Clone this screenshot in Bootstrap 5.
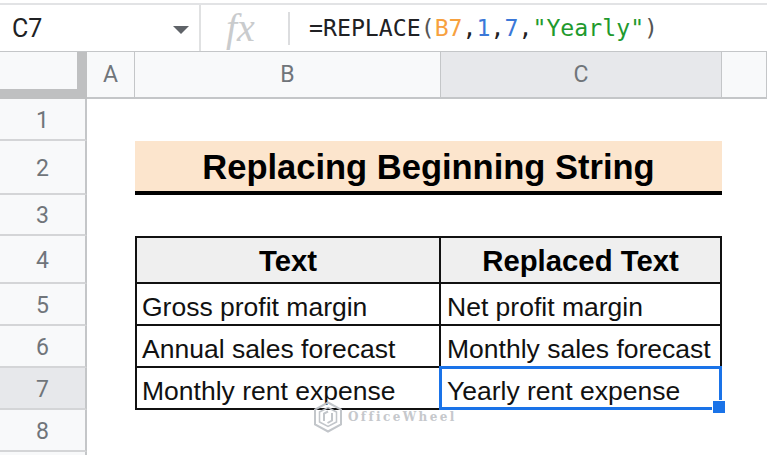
<!DOCTYPE html>
<html lang="en">
<head>
    <meta charset="UTF-8">
    <meta name="viewport" content="width=device-width, initial-scale=1.0">
    <title>Replacing Beginning String</title>
    <link rel="stylesheet" href="https://cdn.jsdelivr.net/npm/bootstrap@5.3.1/dist/css/bootstrap.min.css">
    <style>
        html, body { background: #fff; overflow: hidden; }
        .sheet-app { width: 767px; height: 455px; overflow: hidden; position: relative; font-family: Roboto, "Liberation Sans", sans-serif; }

        /* formula bar */
        .formula-bar { height: 52px; padding-top: 3px; background: #fff; border-bottom: 1px solid #c4c6c8; }
        .formula-inner { height: 48px; border-top: 2px solid #e2e3e5; }
        .name-box { width: 201px; padding-left: 12px; padding-top: 3px; font-size: 25px; color: #202124; border-right: 2px solid #e0e1e2; margin-bottom: 1px; }
        .name-caret { width: 0; height: 0; margin-right: 10px; margin-top: 2px; border-left: 8px solid transparent; border-right: 8px solid transparent; border-top: 8px solid #5f6368; }
        .fx-box { width: 87px; font-family: "Liberation Serif", serif; font-style: italic; font-size: 40px; color: #c9cbcd; padding-left: 25px; line-height: 1; }
        .fx-rule { width: 2px; height: 33px; background: #dcdddf; }
        .formula-text { padding-left: 19px; font-family: "DejaVu Sans Mono", monospace; font-size: 23.2px; color: #202124; white-space: pre; }
        .ref-orange { color: #f7a13f; }
        .num-blue { color: #3b78d8; }
        .str-green { color: #1f9a2e; }
        .paren-grey { color: #555; }

        /* grid */
        .grid-table { table-layout: fixed; width: 767px; border-collapse: separate; border-spacing: 0; }
        .grid-table td, .grid-table th { padding: 0; font-weight: 400; line-height: 1; }
        .col-head, .row-head { background: #f8f9fa; color: #70757a; font-size: 23px; text-align: center; }
        .col-head { height: 47px; border-bottom: 2px solid #c4c6c8; border-right: 1px solid #c4c6c8; }
        .corner { border-right: 10px solid #bfc0c1; border-bottom: 10px solid #bfc0c1; background: #f8f9fa; }
        .grid-table .row-head { border-right: 2px solid #c4c6c8; border-bottom: 2px solid #d4d5d7; padding-top: 2px; }
        .is-active { background: #e7e8eb; }
        .row-h41 { height: 41px; }
        .row-h42 { height: 42px; }
        .row-h54 { height: 54px; }
        .row-h48 { height: 48px; }

        .grid-table .title-cell { background: #fce5cd; border-bottom: 4px solid #000; font-family: "Liberation Sans", sans-serif; font-weight: 700; font-size: 34.5px; text-align: center; color: #000; padding-top: 2px; }
        .grid-table .data-cell { font-family: "Liberation Sans", sans-serif; font-size: 26.5px; color: #111; padding: 6px 0 0 6px; border-right: 2px solid #111; border-bottom: 2px solid #111; white-space: nowrap; overflow: hidden; }
        .grid-table .data-cell.first-col { border-left: 2px solid #111; padding-left: 5px; }
        .grid-table .data-cell.head-cell { background: #efefef; font-weight: 700; font-size: 29.3px; text-align: center; padding: 2px 0 0; color: #000; }
        .grid-table .data-cell.top-edge { border-top: 2px solid #111; }

        .grid-table .data-cell.picked { position: relative; overflow: visible; }
        .pick-frame { position: absolute; left: -2px; top: -2px; right: -2px; bottom: -2px; border: 3px solid #1a73e8; pointer-events: none; }
        .pick-handle { position: absolute; right: -7px; bottom: -7px; width: 14px; height: 14px; background: #1a73e8; border: 1px solid #fff; }

        /* watermark */
        .wm { position: absolute; left: 313px; top: 401px; gap: 5px; color: #c3c6ca; opacity: .95; }
        .wm-text { font-family: "DejaVu Serif", serif; font-weight: 700; font-size: 12px; letter-spacing: 2.4px; line-height: 1; }
    </style>
</head>
<body>
    <div class="sheet-app">
        <div class="formula-bar">
            <div class="formula-inner d-flex align-items-center">
                <div class="name-box d-flex align-items-center justify-content-between h-100">
                    <span>C7</span>
                    <span class="name-caret"></span>
                </div>
                <div class="fx-box">fx</div>
                <div class="fx-rule"></div>
                <div class="formula-text">=REPLACE<span class="paren-grey">(</span><span class="ref-orange">B7</span>,<span class="num-blue">1</span>,<span class="num-blue">7</span>,<span class="str-green">"Yearly"</span><span class="paren-grey">)</span></div>
            </div>
        </div>

        <table class="grid-table">
            <colgroup>
                <col style="width:87px"><col style="width:48px"><col style="width:306px"><col style="width:281px"><col>
            </colgroup>
            <tr>
                <th class="corner"></th>
                <th class="col-head">A</th>
                <th class="col-head">B</th>
                <th class="col-head is-active">C</th>
                <th class="col-head"></th>
            </tr>
            <tr class="row-h42"><td class="row-head">1</td><td colspan="4"></td></tr>
            <tr class="row-h54"><td class="row-head">2</td><td></td><td class="title-cell" colspan="2">Replacing Beginning String</td><td></td></tr>
            <tr class="row-h41"><td class="row-head">3</td><td colspan="4"></td></tr>
            <tr class="row-h48"><td class="row-head">4</td><td></td><td class="data-cell head-cell first-col top-edge">Text</td><td class="data-cell head-cell top-edge">Replaced Text</td><td></td></tr>
            <tr class="row-h42"><td class="row-head">5</td><td></td><td class="data-cell first-col">Gross profit margin</td><td class="data-cell">Net profit margin</td><td></td></tr>
            <tr class="row-h42"><td class="row-head">6</td><td></td><td class="data-cell first-col">Annual sales forecast</td><td class="data-cell">Monthly sales forecast</td><td></td></tr>
            <tr class="row-h42"><td class="row-head is-active">7</td><td></td><td class="data-cell first-col">Monthly rent expense</td><td class="data-cell picked">Yearly rent expense<div class="pick-frame"><div class="pick-handle"></div></div></td><td></td></tr>
            <tr class="row-h42"><td class="row-head">8</td><td colspan="4"></td></tr>
            <tr class="row-h42"><td class="row-head"></td><td colspan="4"></td></tr>
        </table>

        <div class="wm d-flex align-items-center">
            <svg width="30" height="32" viewBox="0 0 30 32" fill="none" stroke="#bfc3c8" stroke-width="2">
                <path d="M15 1.5 28 8.5V23.5L15 30.5 2 23.5V8.5Z"/>
                <path d="M15 6.5 23.5 11V21L15 25.5 6.5 21V11Z" stroke-width="1.5"/>
                <path d="M11 20V12.5L15 10.5M19 12V19.5L14.5 22"/>
            </svg>
            <span class="wm-text">OfficeWheel</span>
        </div>
    </div>

    <script src="https://cdn.jsdelivr.net/npm/bootstrap@5.3.1/dist/js/bootstrap.bundle.min.js"></script>
</body>
</html>
